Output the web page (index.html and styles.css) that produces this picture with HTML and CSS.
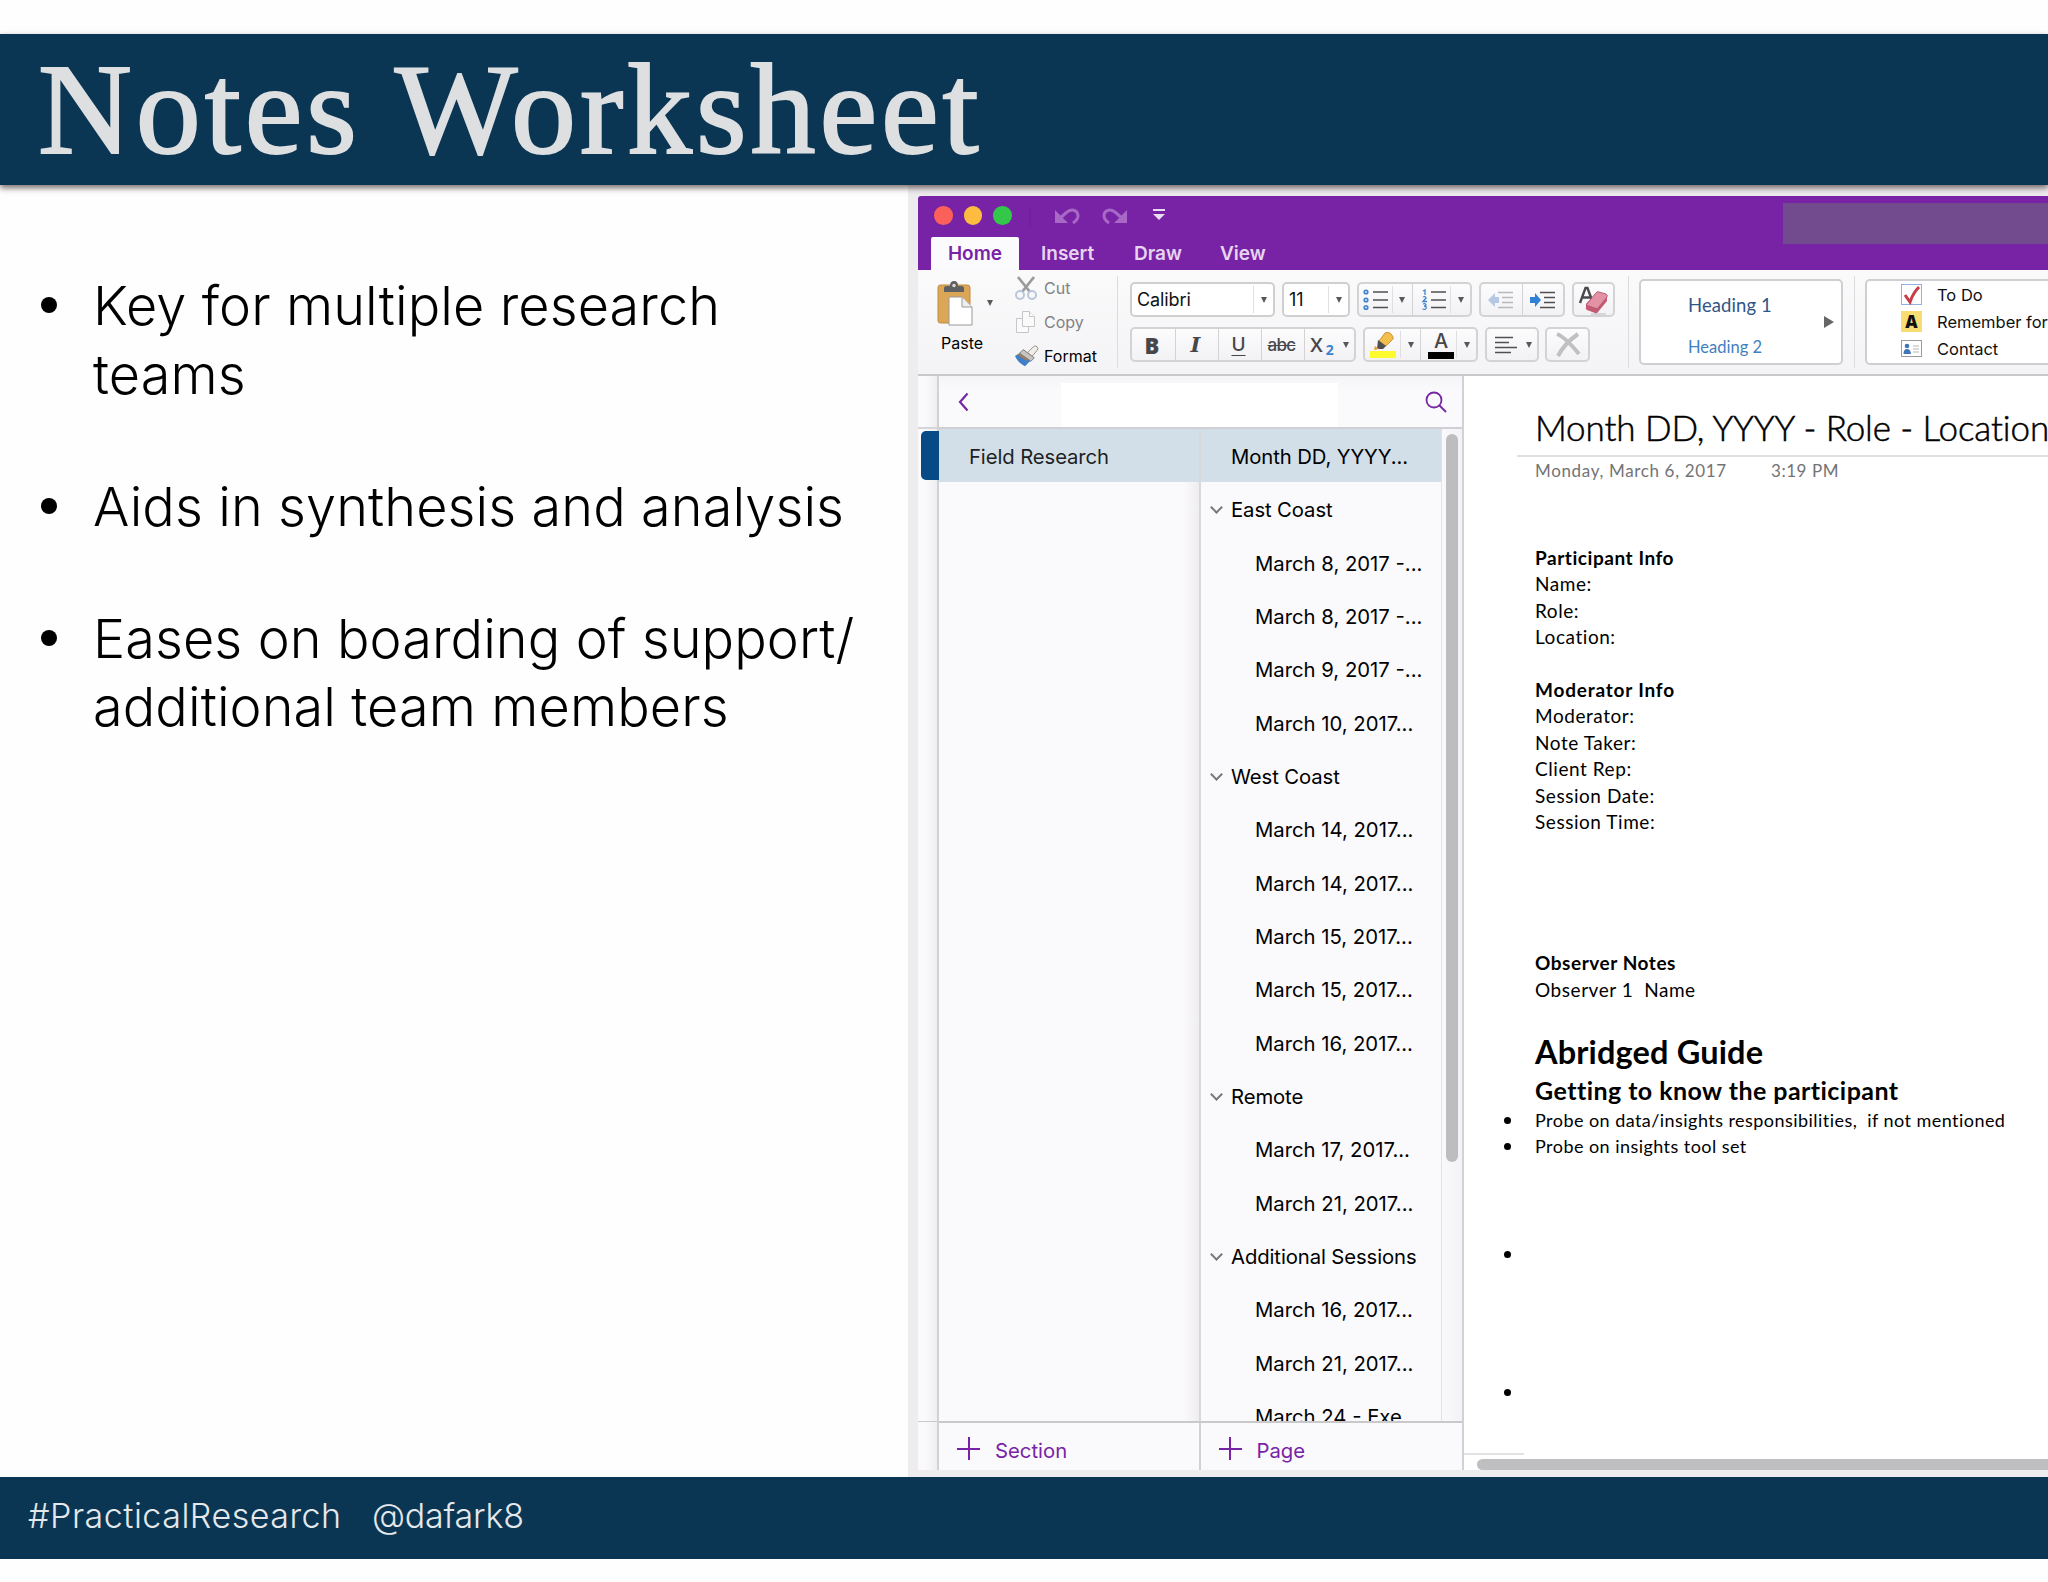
FILE: index.html
```html
<!DOCTYPE html>
<html lang="en">
<head>
    <meta charset="UTF-8">
    <meta name="viewport" content="width=device-width, initial-scale=1.0">
    <title>Notes Worksheet</title>
    <link rel="stylesheet" href="styles.css">
</head>
<body>
    <div class="slide">
        <header class="slide-header">
            <h1>Notes Worksheet</h1>
        </header>

        <main class="slide-body">
            <ul class="points">
                <li>Key for multiple research<br>teams</li>
                <li>Aids in synthesis and analysis</li>
                <li>Eases on boarding of support/<br>additional team members</li>
            </ul>

            <div class="frame">
                <div class="window">
                    <div class="titlebar">
                        <div class="controls">
                            <i class="light red"></i>
                            <i class="light yellow"></i>
                            <i class="light green"></i>
                            <svg class="quick" width="140" height="22" viewBox="0 0 140 22">
                                <path d="M1 2v26" stroke="#6d1f97" stroke-width="1"/>
                                <g fill="none" stroke="#a768c6" stroke-width="3">
                                    <path d="M30 14l8-7c6-4 11-1 11 4 0 3-2 5-5 7"/>
                                    <path d="M94 14l-8-7c-6-4-11-1-11 4 0 3 2 5 5 7"/>
                                </g>
                                <path d="M26 5v13h13zM98 5v13H85z" fill="#a768c6"/>
                                <path d="M124 5h12" stroke="#eadcf3" stroke-width="2"/>
                                <path d="M124 9h12l-6 6z" fill="#eadcf3"/>
                            </svg>
                        </div>
                        <nav class="tabs">
                            <span class="tab active">Home</span>
                            <span class="tab insert">Insert</span>
                            <span class="tab draw">Draw</span>
                            <span class="tab">View</span>
                        </nav>
                        <div class="redacted"></div>
                    </div>

                    <div class="ribbon">
                        <div class="paste">
                            <div class="paste-row">
                                <svg width="37" height="46" viewBox="0 0 37 46">
                                    <rect x="1" y="5" width="32" height="38" rx="2.500" fill="#dba656" stroke="#c08c3f"/>
                                    <path d="M7 12V8q0-2 3-2h3q0-5 4-5t4 5h3q3 0 3 2v4z" fill="#5f6062"/>
                                    <circle cx="17" cy="5.500" r="1.700" fill="#ddd"/>
                                    <path d="M12 17h13l10 10v18H12z" fill="#fff" stroke="#999"/>
                                    <path d="M25 17v10h10" fill="#eee" stroke="#999"/>
                                </svg>
                                <i class="caret"></i>
                            </div>
                            <span>Paste</span>
                        </div>
                        <div class="clip">
                            <div class="clip-row muted">
                                <svg width="24" height="24" viewBox="0 0 24 24" fill="none">
                                    <path d="M4 1l12 15M20 1L8 16" stroke="#9a9b9d" stroke-width="2.800"/>
                                    <circle cx="6" cy="19" r="4" stroke="#b9c6db" stroke-width="2"/>
                                    <circle cx="18" cy="19" r="4" stroke="#b9c6db" stroke-width="2"/>
                                </svg>
                                <span>Cut</span>
                            </div>
                            <div class="clip-row muted">
                                <svg width="24" height="24" viewBox="0 0 24 24" fill="#fafafa" stroke="#c6c6c8">
                                    <path d="M2.500 8.500h7l5 5v9h-12z"/>
                                    <path d="M8.500 1.500h7l5 5v10h-12z"/>
                                    <path d="M15.500 1.500v5h5"/>
                                </svg>
                                <span>Copy</span>
                            </div>
                            <div class="clip-row">
                                <svg width="26" height="24" viewBox="0 0 26 24">
                                    <path d="M15 8l6-6q2-2 4 0t0 4l-6 7z" fill="#f1eee8" stroke="#8b8b8b"/>
                                    <path d="M10 5l12 9-4 4L6 9z" fill="#c9c4be" stroke="#77777a"/>
                                    <path d="M6 9l12 8-6 6Q5 20 1 12z" fill="#3f7fc9"/>
                                    <path d="M6 9l10 7-3 1-9-6z" fill="#a07c55"/>
                                </svg>
                                <span>Format</span>
                            </div>
                        </div>
                        <div class="rule"></div>

                        <div class="format">
                            <div class="tools">
                                <div class="combo font-name"><span>Calibri</span><b><i class="caret"></i></b></div>
                                <div class="combo font-size"><span>11</span><b><i class="caret"></i></b></div>
                                <div class="group lists">
                                    <div class="cell">
                                        <svg width="26" height="22" viewBox="0 0 26 22">
                                            <g fill="#dbe9f8" stroke="#3b82cf" stroke-width="1.600">
                                                <circle cx="3" cy="3" r="1.800"/><circle cx="3" cy="11" r="1.800"/><circle cx="3" cy="18.500" r="1.800"/>
                                            </g>
                                            <path d="M10 3h15M10 11h15M10 18.500h15" stroke="#505052" stroke-width="1.700"/>
                                        </svg>
                                        <b><i class="caret"></i></b>
                                    </div>
                                    <div class="cell">
                                        <svg width="26" height="22" viewBox="0 0 26 22">
                                            <g fill="none" stroke="#3b82cf" stroke-width="1.300">
                                                <path d="M1 2l2-1v5M1 8q3-1 3 1l-3 3.500h4M1 15q3-1 3 1 0 1-2 1 3 0 2 2.500-1 1.500-3.500.5"/>
                                            </g>
                                            <path d="M9 3h15M9 11h15M9 18.500h15" stroke="#505052" stroke-width="1.700"/>
                                        </svg>
                                        <b><i class="caret"></i></b>
                                    </div>
                                </div>
                                <div class="group indent">
                                    <div class="cell">
                                        <svg width="26" height="18" viewBox="0 0 26 18">
                                            <path d="M0 9l7-7v4h4v6H7v4z" fill="#b5c7e2"/>
                                            <path d="M10 1.500h15M14 6.500h11M14 11.500h11M10 16.500h15" stroke="#b9b9bb" stroke-width="1.600"/>
                                        </svg>
                                    </div>
                                    <div class="cell">
                                        <svg width="26" height="18" viewBox="0 0 26 18">
                                            <path d="M11 9L5 2v4H0v6h5v4z" fill="#2f82d6"/>
                                            <path d="M10 1.500h15M14 6.500h11M14 11.500h11M10 16.500h15" stroke="#505052" stroke-width="1.600"/>
                                        </svg>
                                    </div>
                                </div>
                                <div class="group erase">
                                    <svg width="32" height="30" viewBox="0 0 32 30">
                                        <path d="M2 18L7.500 3h2L15 18M4.500 12.500h8" fill="none" stroke="#4a4a4c" stroke-width="2.400"/>
                                        <path d="M13 29h15" stroke="#bbb"/>
                                        <path d="M18 8q1-2 3-1l7 2q2 1 1 3v4L20 27q-1 2-3 1l-8-3q-2-1-1-3v-3z" fill="#c45a74"/>
                                        <path d="M18 8q1-2 3-1l7 2q2 1 1 3l-9 11q-1 1-2 .5L8 20z" fill="#e392a6" stroke="#b35069" stroke-width=".8"/>
                                    </svg>
                                </div>
                            </div>
                            <div class="tools">
                                <div class="group styles">
                                    <div class="cell bold">B</div>
                                    <div class="cell italic">I</div>
                                    <div class="cell underline">U</div>
                                    <div class="cell strike">abc</div>
                                    <div class="cell sub">X<sub>2</sub><i class="caret"></i></div>
                                </div>
                                <div class="group colors">
                                    <div class="cell">
                                        <svg width="28" height="28" viewBox="0 0 28 28">
                                            <path d="M16 2q3-2 6 1t2 5l-7 7-7-5z" fill="#f3c04d" stroke="#c9963a"/>
                                            <path d="M9 9l8 6-3 3H8z" fill="#505052"/>
                                            <path d="M6 15l4 3-5 1z" fill="#e89b35"/>
                                            <path d="M1 20h26v7H1z" fill="#fdfb2e"/>
                                        </svg>
                                        <b><i class="caret"></i></b>
                                    </div>
                                    <div class="cell">
                                        <span class="ink">A</span>
                                        <b><i class="caret"></i></b>
                                    </div>
                                </div>
                                <div class="group align">
                                    <svg width="24" height="18" viewBox="0 0 24 18">
                                        <path d="M1 1.500h18M1 6.500h14M1 11.500h22M1 16.500h16" stroke="#505052" stroke-width="1.700"/>
                                    </svg>
                                    <i class="caret"></i>
                                </div>
                                <div class="group remove">
                                    <svg width="26" height="24" viewBox="0 0 26 24">
                                        <path d="M2 1q8 3 22 20M23 1Q9 11 3 23" fill="none" stroke="#c0c0c3" stroke-width="4"/>
                                    </svg>
                                </div>
                            </div>
                        </div>
                        <div class="rule"></div>

                        <div class="gallery headings">
                            <div>
                                <span class="h-one">Heading 1</span>
                                <span class="h-two">Heading 2</span>
                            </div>
                            <i class="more"></i>
                        </div>
                        <div class="rule"></div>

                        <div class="gallery tags">
                            <div class="tag">
                                <svg width="22" height="22" viewBox="0 0 22 22">
                                    <rect x=".5" y=".5" width="20" height="20" fill="#fff" stroke="#8eb4dd"/>
                                    <path d="M4 11l5 7Q12 9 18 3" fill="none" stroke="#cb3b45" stroke-width="3"/>
                                </svg>
                                <span>To Do</span>
                            </div>
                            <div class="tag"><b class="mark">A</b><span>Remember for</span></div>
                            <div class="tag">
                                <svg width="22" height="18" viewBox="0 0 22 18">
                                    <rect x=".5" y=".5" width="20" height="16" fill="#fff" stroke="#9b9b9d"/>
                                    <circle cx="6" cy="6" r="2.300" fill="#4274b8"/>
                                    <path d="M2.500 14q0-5 3.500-5t4 5z" fill="#4274b8"/>
                                    <path d="M12 6h6M12 9h6M12 12h6" stroke="#b5b5b5"/>
                                </svg>
                                <span>Contact</span>
                            </div>
                        </div>
                    </div>

                    <div class="workspace">
                        <div class="strip">
                            <div class="strip-head"></div>
                            <div class="notebook"></div>
                            <div class="strip-foot"></div>
                        </div>
                        <aside class="sidebar">
                            <div class="side-head">
                                <svg width="11" height="20" viewBox="0 0 11 20">
                                    <path d="M9.500 1.500L2 10l7.500 8.500" fill="none" stroke="#7426a3" stroke-width="2.200"/>
                                </svg>
                                <div class="blank"></div>
                                <svg width="22" height="22" viewBox="0 0 22 22" fill="none" stroke="#7426a3" stroke-width="1.800">
                                    <circle cx="9" cy="9" r="7.500"/>
                                    <path d="M14.500 14.500l6.500 6.500"/>
                                </svg>
                            </div>
                            <div class="lists-row">
                                <div class="sections">
                                    <div class="row selected">Field Research</div>
                                </div>
                                <div class="pages">
                                    <div class="row selected">Month DD, YYYY...</div>
                                    <div class="row folder"><i class="chev"></i>East Coast</div>
                                    <div class="row sub">March 8, 2017 -...</div>
                                    <div class="row sub">March 8, 2017 -...</div>
                                    <div class="row sub">March 9, 2017 -...</div>
                                    <div class="row sub">March 10, 2017...</div>
                                    <div class="row folder"><i class="chev"></i>West Coast</div>
                                    <div class="row sub">March 14, 2017...</div>
                                    <div class="row sub">March 14, 2017...</div>
                                    <div class="row sub">March 15, 2017...</div>
                                    <div class="row sub">March 15, 2017...</div>
                                    <div class="row sub">March 16, 2017...</div>
                                    <div class="row folder"><i class="chev"></i>Remote</div>
                                    <div class="row sub">March 17, 2017...</div>
                                    <div class="row sub">March 21, 2017...</div>
                                    <div class="row folder"><i class="chev"></i>Additional Sessions</div>
                                    <div class="row sub">March 16, 2017...</div>
                                    <div class="row sub">March 21, 2017...</div>
                                    <div class="row sub">March 24 - Exe</div>
                                </div>
                                <div class="scroll"><div class="thumb"></div></div>
                            </div>
                            <div class="side-foot">
                                <div class="add section"><i class="plus"></i>Section</div>
                                <div class="add"><i class="plus"></i>Page</div>
                            </div>
                        </aside>

                        <article class="note">
                            <div class="note-title">Month DD, YYYY - Role - Location</div>
                            <div class="note-date"><span class="date">Monday, March 6, 2017</span><span class="time">3:19 PM</span></div>
                            <div class="block participant">
                                <b>Participant Info</b>
                                <p>Name:</p>
                                <p>Role:</p>
                                <p>Location:</p>
                            </div>
                            <div class="block moderator">
                                <b>Moderator Info</b>
                                <p>Moderator:</p>
                                <p>Note Taker:</p>
                                <p>Client Rep:</p>
                                <p>Session Date:</p>
                                <p>Session Time:</p>
                            </div>
                            <div class="block observer">
                                <b>Observer Notes</b>
                                <p>Observer 1 &nbsp;Name</p>
                            </div>
                            <h2>Abridged Guide</h2>
                            <h3>Getting to know the participant</h3>
                            <ul class="probes">
                                <li>Probe on data/insights responsibilities, &nbsp;if not mentioned</li>
                                <li>Probe on insights tool set</li>
                                <li class="empty"></li>
                                <li class="empty last"></li>
                            </ul>
                            <div class="note-end">
                                <div class="end-line"></div>
                                <div class="hscroll"></div>
                            </div>
                        </article>
                    </div>
                </div>
            </div>
        </main>

        <footer class="slide-footer">
            <span class="hash">#PracticalResearch</span>
            <span class="handle">@dafark8</span>
        </footer>
    </div>
</body>
</html>
```
FILE: styles.css
```css
:root {
    --navy: #0a3654;
    --purple: #7823a6;
    --line: #c9c8cb;
    --panel: #faf9fb;
}

* {
    box-sizing: border-box;
    margin: 0;
    padding: 0;
}

body {
    width: 2048px;
    height: 1582px;
    overflow: hidden;
    background: #fefefe;
    font-family: Inter, sans-serif;
    color: #111;
}

svg {
    display: block;
    flex: none;
}

.slide {
    display: flex;
    flex-direction: column;
    height: 1582px;
    padding: 34px 0 23px;
}

/* slide bars */
.slide-header {
    position: relative;
    z-index: 2;
    height: 151px;
    flex: none;
    background: var(--navy);
    box-shadow: 0 3px 6px rgba(50, 30, 30, 0.65);
}

h1 {
    padding-left: 38px;
    font: 400 130px/150px "Liberation Serif", serif;
    letter-spacing: 3.9px;
    color: #dddfe1;
    -webkit-text-stroke: 2px #dddfe1;
}

.slide-footer {
    display: flex;
    height: 82px;
    flex: none;
    padding-left: 28px;
    background: var(--navy);
    color: #e4e8eb;
    font: 300 34px/77px Inter, sans-serif;
}

.hash {
    width: 344px;
    letter-spacing: 0.5px;
}

.handle {
    letter-spacing: -0.2px;
}

.slide-body {
    display: flex;
    height: 1292px;
    flex: none;
}

/* left bullets */
.points {
    width: 908px;
    flex: none;
    padding: 87px 0 0 93px;
    list-style: none;
    font: 300 54px/68.5px Inter, sans-serif;
    letter-spacing: 0.1px;
    color: #000;
    white-space: nowrap;
}

.points li {
    position: relative;
    margin-bottom: 63.5px;
}

.points li::before {
    content: "";
    position: absolute;
    left: -52px;
    top: 25px;
    width: 16px;
    height: 16px;
    border-radius: 50%;
    background: #000;
}

/* app window */
.frame {
    width: 1140px;
    padding: 11px 0 7px 10px;
    background: #eeecef;
    overflow: hidden;
}

.window {
    width: 1130px;
    height: 1274px;
    border-top-left-radius: 3px;
    overflow: hidden;
    background: #fff;
}

.titlebar {
    position: relative;
    height: 74px;
    background: var(--purple);
}

.controls {
    display: flex;
    align-items: center;
    gap: 11px;
    height: 41px;
    padding: 0 0 2px 16px;
}

.light {
    width: 18.500px;
    height: 18.500px;
    border-radius: 50%;
}

.red { background: #fc605b; }
.yellow { background: #fdbc40; }
.green { background: #34c84a; }

.quick {
    margin-left: 6px;
}

.tabs {
    display: flex;
    height: 33px;
    padding-left: 13px;
    font-size: 19px;
    font-weight: 600;
    line-height: 33px;
    color: #e6d5ef;
}

.tab.active {
    width: 88px;
    margin-right: 22px;
    background: #fbfafc;
    color: var(--purple);
    text-align: center;
    border-radius: 2px 2px 0 0;
}

.tab.insert { width: 93px; }
.tab.draw { width: 86px; }

.redacted {
    position: absolute;
    left: 865px;
    top: 7px;
    width: 266px;
    height: 41px;
    background: #714b8e;
}

/* ribbon */
.ribbon {
    display: flex;
    height: 106px;
    background: linear-gradient(#fafafb, #f4f3f5);
    border-bottom: 2px solid var(--line);
}

.ribbon > * {
    flex: none;
}

.ribbon svg {
    overflow: visible;
}

.rule {
    width: 1px;
    height: 92px;
    margin-top: 6px;
    background: #dcdbde;
}

.caret {
    width: 0;
    height: 0;
    border: 3.500px solid transparent;
    border-top: 6px solid #58585a;
    border-bottom: 0;
}

.paste {
    width: 96px;
    padding: 10px 0 0 19px;
    font-size: 16px;
    line-height: 22px;
    color: #000;
}

.paste-row {
    display: flex;
    align-items: center;
    gap: 13px;
    margin-bottom: 6px;
}

.paste span {
    margin-left: 4px;
}

.clip {
    width: 103px;
    padding-top: 5px;
}

.clip-row {
    display: flex;
    align-items: center;
    gap: 6px;
    height: 34px;
    font-size: 16px;
    line-height: 26px;
    color: #000;
    padding-bottom: 8px;
}

.clip-row svg {
    width: 24px;
}

.muted {
    color: #828284;
}

.format {
    width: 510px;
    padding: 12px 0 0 12px;
}

.tools {
    display: flex;
    gap: 7px;
    height: 35px;
    margin-bottom: 10px;
}

.combo, .group {
    display: flex;
    flex: none;
    border: 2px solid #cfced1;
    border-radius: 5px;
}

.combo {
    justify-content: space-between;
    align-items: center;
    background: #fff;
    padding-left: 5px;
    font-size: 18px;
}

.combo b, .cell b {
    display: flex;
    align-items: center;
    justify-content: center;
    width: 20px;
    height: 27px;
    border-left: 1px solid #dfdee1;
}

.font-name { width: 145px; letter-spacing: -0.1px; }
.font-size { width: 68px; }

.group {
    align-items: center;
    background: linear-gradient(#fcfcfd, #f2f1f4);
    border-color: #d3d2d5;
}

.cell {
    display: flex;
    align-items: center;
    justify-content: center;
    height: 31px;
    flex: 1;
    border-left: 1px solid #d3d2d5;
}

.cell:first-child {
    border-left: 0;
}

.lists { width: 115px; }
.lists .cell, .colors .cell { justify-content: space-between; padding-left: 4px; }
.lists .cell + .cell { padding-left: 9px; }
.indent { width: 86px; }
.erase { width: 43px; justify-content: center; }

.styles {
    width: 226px;
    color: #47474a;
    font-size: 20px;
}

.styles .cell { flex: none; width: 43px; padding-right: 3px; }
.styles .cell.sub { width: 50px; flex: 1; padding-right: 0; }
.styles .bold { font: 800 22px "Open Sans", sans-serif; }
.styles .italic { font: italic 700 21px "DejaVu Serif", serif; }
.styles .underline { font-size: 19px; text-decoration: underline; text-underline-offset: 4px; font-weight: 500; }
.styles .strike { font-size: 17px; font-weight: 500; letter-spacing: -0.7px; text-decoration: line-through; }
.styles .sub { font: 600 20px "Open Sans", sans-serif; }
.sub sub { color: #3b82cf; font-size: 14px; font-weight: 700; margin: 10px 9px 0 3px; }

.colors { width: 115px; }

.ink {
    width: 26px;
    height: 28px;
    margin-left: 3px;
    border-bottom: 7px solid #000;
    font-size: 20px;
    font-weight: 500;
    line-height: 20px;
    text-align: center;
    color: #47474a;
}

.align { width: 54px; padding-left: 7px; gap: 8px; }
.remove { width: 45px; justify-content: center; }
.align + .remove { margin-left: -1px; }

.gallery {
    height: 86px;
    margin: 9px 11px 0 10px;
    background: #fff;
    border: 2px solid #cfced1;
    border-radius: 5px;
}

.headings {
    display: flex;
    justify-content: space-between;
    align-items: center;
    width: 204px;
    padding: 0 7px 0 47px;
    font-family: Lato, sans-serif;
}

.headings span { display: block; }
.h-one { padding-top: 5px; font-size: 18.500px; line-height: 44px; color: #2f5585; letter-spacing: 0.1px; }
.h-two { font-size: 16.500px; line-height: 40px; color: #3f80c0; }

.more {
    border: 6px solid transparent;
    border-left: 10px solid #666;
    border-right: 0;
}

.tags {
    width: 300px;
    padding: 0 0 0 34px;
}

.tag {
    display: flex;
    align-items: center;
    gap: 14px;
    height: 27px;
    font-size: 16.500px;
    white-space: nowrap;
}

.mark {
    width: 21px;
    height: 21px;
    margin-right: 1px;
    background: #f8de72;
    font: 800 17px/21px "Open Sans", sans-serif;
    text-align: center;
}

/* notebook panes */
.workspace {
    display: flex;
    height: 1094px;
}

.strip {
    width: 21px;
    border-right: 2px solid #d2d1d5;
    background: linear-gradient(90deg, #faf9fb 40%, #eeedf0);
}

.strip-head {
    height: 53px;
    border-bottom: 2px solid #d5d4d8;
}

.notebook {
    width: 18px;
    height: 49px;
    margin: 2px 0 0 3px;
    border-radius: 5px 0 0 5px;
    background: #084a86;
}

.strip-foot {
    margin-top: 941px;
    border-top: 1px solid var(--line);
}

.sidebar {
    width: 525px;
    flex: none;
    border-right: 2px solid #d2d1d5;
    background: var(--panel);
}

.side-head {
    display: flex;
    align-items: center;
    justify-content: space-between;
    height: 53px;
    padding: 0 15px 0 19px;
    border-bottom: 2px solid #d0d0d4;
    background: linear-gradient(#f5f4f7, #faf9fc 30%);
}

.blank {
    width: 277px;
    height: 44px;
    margin: 7px 0 0 4px;
    background: #fff;
}

.lists-row {
    display: flex;
    height: 992px;
    overflow: hidden;
}

.sections {
    width: 262px;
    background: linear-gradient(90deg, transparent 94%, #efedf1);
    border-right: 2px solid #d9d8dc;
}

.pages {
    width: 240px;
}

.row {
    height: 53.330px;
    line-height: 56px;
    padding-left: 30px;
    font-size: 20.300px;
    color: #000;
    white-space: nowrap;
}

.row.selected { background: #d3dfe8; letter-spacing: -0.1px; }
.sections .row { color: #1d1f24; }
.row.sub { padding-left: 54px; }
.row.folder { display: flex; padding-left: 0; letter-spacing: -0.1px; }

.chev {
    width: 9px;
    height: 9px;
    margin: 21px 10px 0 11px;
    border: solid #77777a;
    border-width: 0 2px 2px 0;
    transform: rotate(45deg);
}

.scroll {
    width: 21px;
    padding: 5px 0 0 4px;
    border-left: 1px solid #e2e1e5;
    background: linear-gradient(90deg, #f9f8fb, #f3f2f5);
}

.thumb {
    width: 12px;
    height: 728px;
    border-radius: 6px;
    background: #bdbdc0;
}

.side-foot {
    display: flex;
    height: 49px;
    border-top: 2px solid var(--line);
}

.add {
    display: flex;
    align-items: center;
    gap: 15px;
    width: 262px;
    padding: 8px 0 0 18px;
    font-size: 20.300px;
    color: var(--purple);
}

.section {
    border-right: 2px solid #d2d1d5;
}

.plus {
    width: 23px;
    height: 23px;
    margin-top: -4px;
    background:
        linear-gradient(var(--purple), var(--purple)) center / 2px 100% no-repeat,
        linear-gradient(var(--purple), var(--purple)) center / 100% 2px no-repeat;
}

/* note page */
.note {
    width: 584px;
    flex: none;
    overflow: hidden;
    font-family: Lato, sans-serif;
    white-space: nowrap;
    color: #000;
}

.note-title {
    height: 81px;
    margin-left: 53px;
    padding: 26px 0 0 18px;
    border-bottom: 2px solid #e0dfe2;
    font-size: 35px;
    font-weight: 300;
    line-height: 50px;
    letter-spacing: -0.1px;
    -webkit-text-stroke: 0.5px #000;
}

.note-date {
    display: flex;
    margin-left: 71px;
    font-size: 17px;
    line-height: 28px;
    color: #737376;
}

.date {
    width: 236px;
    letter-spacing: 0.650px;
}

.time {
    letter-spacing: 0.550px;
}

.block {
    margin-left: 71px;
    font-size: 19px;
    line-height: 26.400px;
    letter-spacing: 0.550px;
}

.block b { display: block; }
.participant { margin-top: 60px; }
.moderator { margin-top: 26.400px; }
.moderator b { letter-spacing: 0.800px; }
.observer { margin-top: 115px; }

h2 {
    margin: 27px 0 0 71px;
    font-size: 32.500px;
    line-height: 44px;
    letter-spacing: 0.150px;
}

h3 {
    margin-left: 71px;
    font-size: 25px;
    line-height: 32px;
    letter-spacing: 0.450px;
}

.probes {
    height: 347px;
    padding: 2px 0 0 71px;
    list-style: none;
    font-size: 18px;
    line-height: 25.500px;
    letter-spacing: 0.450px;
}

.probes li {
    position: relative;
    height: 25.500px;
}

.probes li::before {
    content: "";
    position: absolute;
    left: -31px;
    top: 9px;
    width: 7px;
    height: 7px;
    border-radius: 50%;
    background: #000;
}

.probes .empty { margin-top: 83px; }
.probes .last { margin-top: 112px; }

.end-line {
    width: 60px;
    height: 2px;
    background: #e2e2e4;
}

.hscroll {
    width: 700px;
    height: 11px;
    margin: 4px 0 0 13px;
    border-radius: 6px;
    background: #bfbec1;
}
```
